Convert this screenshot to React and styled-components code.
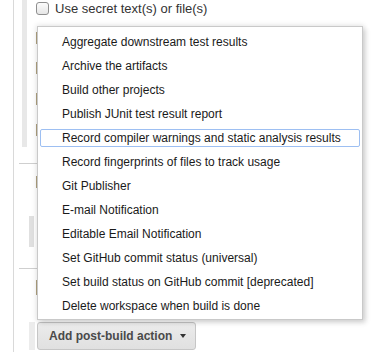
import React from 'react';
import styled, { createGlobalStyle } from 'styled-components';

const GlobalStyle = createGlobalStyle`
  html, body {
    margin: 0;
    padding: 0;
    background: #fff;
    overflow: hidden;
  }
  body {
    font-family: 'Liberation Sans', Arial, sans-serif;
  }
`;

const menuItems = [
  'Aggregate downstream test results',
  'Archive the artifacts',
  'Build other projects',
  'Publish JUnit test result report',
  'Record compiler warnings and static analysis results',
  'Record fingerprints of files to track usage',
  'Git Publisher',
  'E-mail Notification',
  'Editable Email Notification',
  'Set GitHub commit status (universal)',
  'Set build status on GitHub commit [deprecated]',
  'Delete workspace when build is done',
];

export default function App() {
  return (
    <>
      <GlobalStyle />
      <Page>
        <Rail />
        <Body>
          <TopSection>
            <Band />
            <Fields>
              <CheckRow>
                <CheckBox />
                <CheckLabel>Use secret text(s) or file(s)</CheckLabel>
              </CheckRow>
              <FieldEdge $top={16} />
              <FieldEdge $top={18} />
              <FieldEdge $top={19} />
              <FieldEdge $top={19} />
            </Fields>
          </TopSection>
          <Divider $top={16} />
          <MidSection>
            <FieldEdge $top={12} />
            <GrayBlock />
          </MidSection>
          <Divider $top={0} />
          <MidSection>
            <FieldEdge $top={11} $height={15} />
          </MidSection>
          <BottomSection>
            <SideBand />
            <AddButton>
              Add post-build action
              <Caret />
            </AddButton>
          </BottomSection>
        </Body>

        <Menu>
          {menuItems.map((label, i) => (
            <MenuItem key={label}>
              <MenuLabel $active={i === 4}>{label}</MenuLabel>
            </MenuItem>
          ))}
        </Menu>
      </Page>
    </>
  );
}

const Page = styled.div`
  position: relative;
  display: flex;
  width: 389px;
  height: 352px;
  padding-left: 13px;
  box-sizing: border-box;
  overflow: hidden;
`;

const Rail = styled.div`
  width: 1px;
  background: #d9d9d9;
  flex-shrink: 0;
`;

const Body = styled.div`
  flex: 1;
  display: flex;
  flex-direction: column;
  padding-left: 5px;
`;

const TopSection = styled.div`
  display: flex;
  height: 147px;
  padding-left: 3px;
`;

const Band = styled.div`
  width: 5px;
  background: #e8e8e8;
`;

const Fields = styled.div`
  display: flex;
  flex-direction: column;
  margin-left: 9px;
`;

const CheckRow = styled.div`
  display: flex;
  align-items: center;
  height: 16px;
`;

const CheckBox = styled.span`
  width: 11px;
  height: 11px;
  border: 1px solid #8f8f8f;
  border-radius: 3px;
  background: linear-gradient(#fcfcfc, #e6e6e6);
  flex-shrink: 0;
`;

const CheckLabel = styled.span`
  margin-left: 6px;
  font-size: 13px;
  color: #333;
  line-height: 16px;
  margin-top: 2px;
`;

const FieldEdge = styled.div`
  width: 1px;
  height: ${(p) => p.$height || 12}px;
  margin-top: ${(p) => p.$top}px;
  background: #b0a280;
`;

const Divider = styled.div`
  height: 1px;
  width: 40px;
  margin-top: ${(p) => p.$top}px;
  background: #cfcfcf;
`;

const MidSection = styled.div`
  display: flex;
  flex-direction: column;
  padding-left: 17px;
  height: 104px;
`;

const GrayBlock = styled.div`
  width: 5px;
  height: 31px;
  margin-top: 28px;
  margin-left: -7px;
  background: #e0e0e0;
`;

const BottomSection = styled.div`
  display: flex;
  margin-top: -51px;
  padding-left: 10px;
`;

const SideBand = styled.div`
  width: 6px;
  background: #ececec;
`;

const AddButton = styled.div`
  display: flex;
  align-items: center;
  height: 28px;
  width: 159px;
  margin-left: 2px;
  padding: 0 9px 0 11px;
  box-sizing: border-box;
  border: 1px solid #c6c6c6;
  border-radius: 3px;
  background: linear-gradient(#ececec, #e0e0e0);
  font-size: 12px;
  font-weight: bold;
  color: #4a4a4a;
  white-space: nowrap;
`;

const Caret = styled.span`
  margin-left: auto;
  width: 0;
  height: 0;
  border-left: 3.5px solid transparent;
  border-right: 3.5px solid transparent;
  border-top: 4px solid #333;
`;

const Menu = styled.div`
  position: absolute;
  left: 37px;
  top: 26px;
  width: 326px;
  box-sizing: border-box;
  padding: 3px 0 1px;
  background: #fff;
  border: 1px solid #c9c9c9;
  box-shadow: 0 0 5px 1px rgba(0, 0, 0, 0.1), 3px 3px 5px rgba(0, 0, 0, 0.12);
`;

const MenuItem = styled.div`
  height: 24px;
  padding: 3px 2px;
  box-sizing: border-box;
`;

const MenuLabel = styled.div`
  height: 18px;
  box-sizing: border-box;
  padding-left: 21px;
  border: 1px solid ${(p) => (p.$active ? '#9dbff2' : 'transparent')};
  border-radius: 2px;
  font-size: 12px;
  line-height: 16px;
  color: #1a1a1a;
  white-space: nowrap;
`;
